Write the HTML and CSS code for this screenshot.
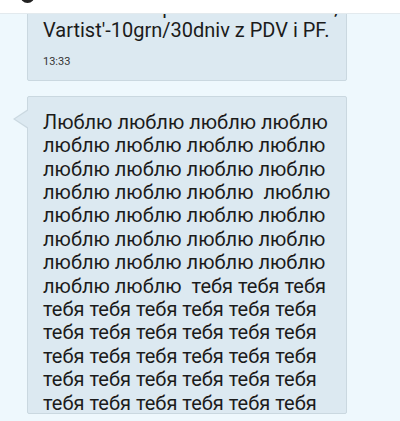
FILE: index.html
```html
<!DOCTYPE html>
<html lang="uk">
<head>
    <meta charset="UTF-8">
    <meta name="viewport" content="width=device-width, initial-scale=1.0">
    <title>Повідомлення</title>
    <link rel="stylesheet" href="styles.css">
</head>
<body>
    <div class="screen">
        <div class="topbar">
            <span class="avatar"></span>
        </div>

        <div class="thread">
            <div class="bubble">
                <p class="msg one-line">Pidkliucheno posluhu Internet 50,</p>
                <p class="msg one-line">Vartist'-10grn/30dniv z PDV i PF.</p>
                <div class="time">13:33</div>
            </div>

            <div class="bubble has-tail">
                <p class="msg">Люблю люблю люблю люблю люблю люблю люблю люблю люблю люблю люблю люблю люблю люблю люблю&nbsp; люблю люблю люблю люблю люблю люблю люблю люблю люблю люблю люблю люблю люблю люблю люблю&nbsp; тебя тебя тебя тебя тебя тебя тебя тебя тебя тебя тебя тебя тебя тебя тебя тебя тебя тебя тебя тебя тебя тебя тебя тебя тебя тебя тебя тебя тебя тебя тебя тебя тебя</p>
            </div>
        </div>
    </div>
</body>
</html>
```

FILE: styles.css
```css
body {
    margin: 0;
    background-color: #eef8fd;
    color: #1b1b1b;
    font-family: Roboto, "Noto Sans", sans-serif;
}

.screen {
    position: relative;
    height: 421px;
    overflow: hidden;
}

.topbar {
    position: absolute;
    top: 0;
    left: 0;
    right: 0;
    height: 13px;
    background-color: #fff;
    border-bottom: 1px solid #e3eaee;
    z-index: 2;
}

.avatar {
    position: absolute;
    left: 20px;
    top: -13px;
    width: 15px;
    height: 16px;
    border-radius: 50%;
    background-color: #222;
}

.thread {
    display: flex;
    flex-direction: column;
    gap: 15px;
    margin-top: -17px;
    padding-left: 27px;
}

.bubble {
    position: relative;
    width: 320px;
    padding: 12px 0 12px 15px;
    box-sizing: border-box;
    background-color: #dce9f1;
    border: 1px solid #cad8e0;
    border-radius: 2px;
}

.msg {
    margin: 0;
    font-size: 20px;
    line-height: 23.4px;
    padding-right: 12px;
}

.one-line {
    white-space: nowrap;
}

.time {
    margin-top: 12px;
    font-size: 11px;
    line-height: 13px;
    color: #333;
}

.has-tail {
    padding-top: 14px;
    padding-bottom: 0;
    height: 318px;
}

.has-tail::before,
.has-tail::after {
    content: "";
    position: absolute;
    top: 12px;
    border-style: solid;
    border-color: transparent;
}

.has-tail::before {
    left: -15px;
    border-width: 10px 15px 10px 0;
    border-right-color: #cad8e0;
}

.has-tail::after {
    left: -13px;
    top: 13px;
    border-width: 9px 14px 9px 0;
    border-right-color: #dce9f1;
}
```
